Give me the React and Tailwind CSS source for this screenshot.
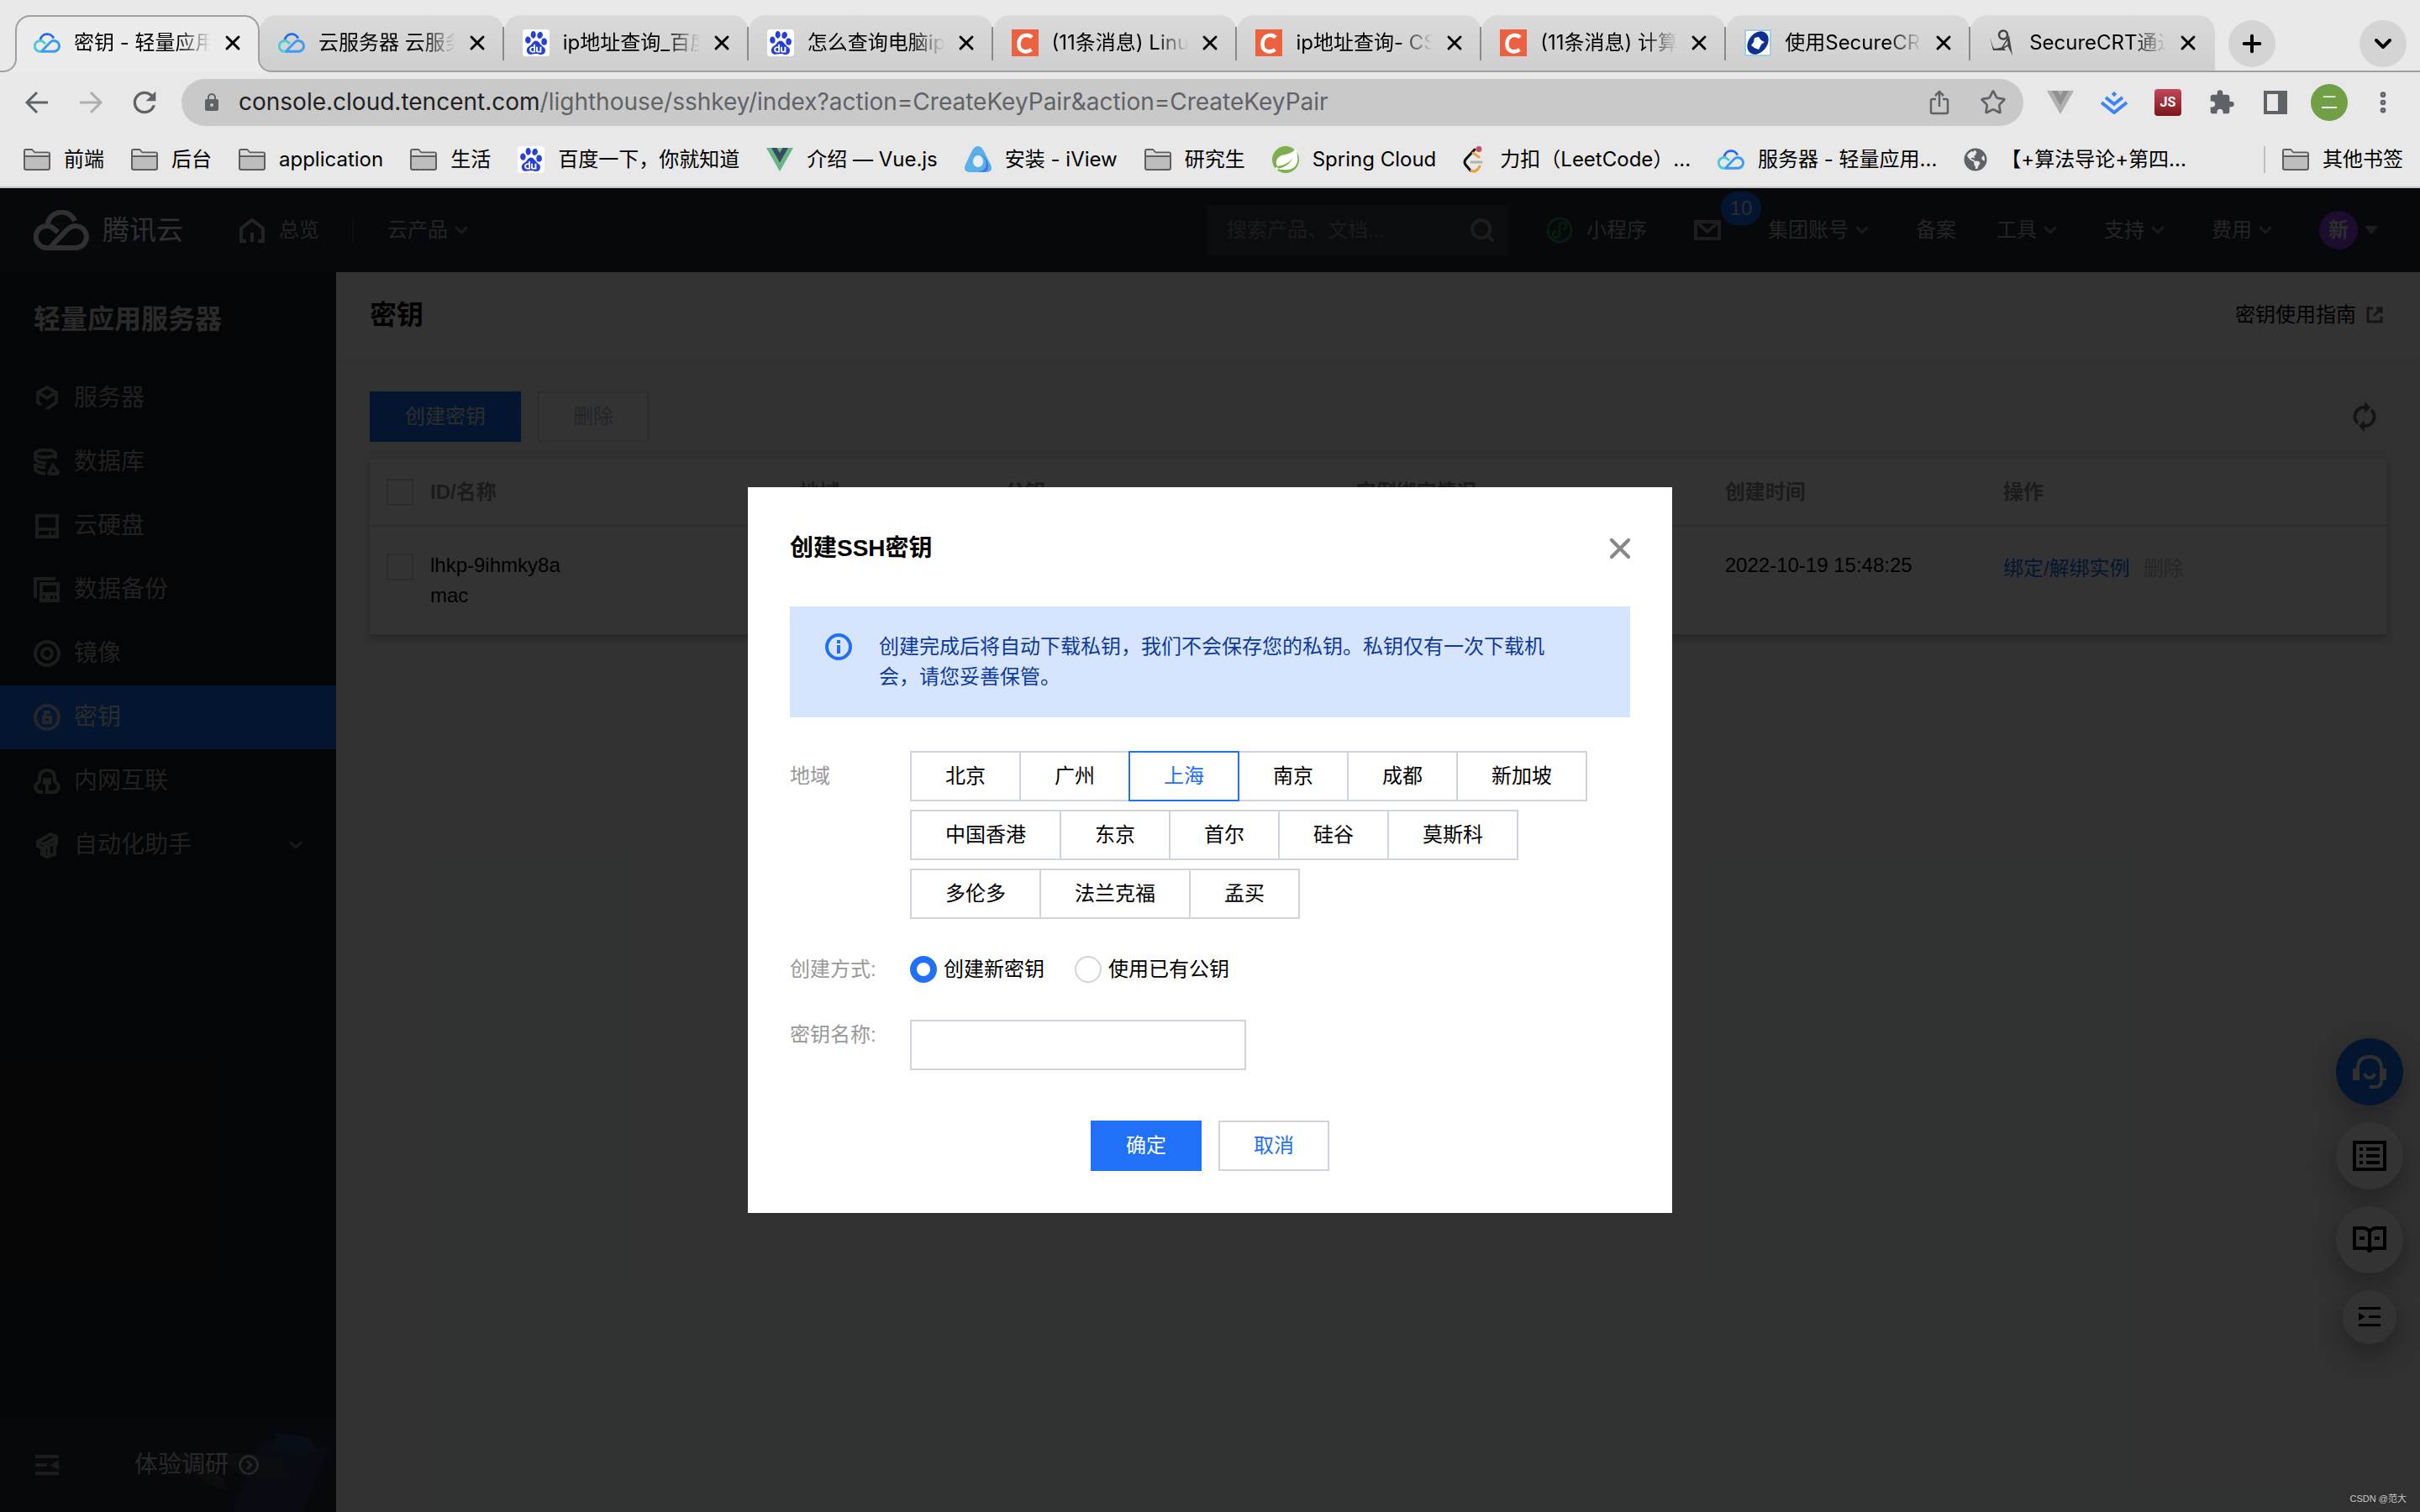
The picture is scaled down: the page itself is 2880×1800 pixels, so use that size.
import { useState } from "react"
import { ChevronDown, MoreVertical, Plus, Search, Star, X } from "lucide-react"
import { FaGlobeAmericas } from "react-icons/fa"
import { MdExtension, MdLock, MdRefresh } from "react-icons/md"
import { SiBaidu } from "react-icons/si"

/* ---------- brand icons ---------- */

const CloudLogo = ({ colored, className }) => (
  <svg viewBox="0 0 66 48" fill="none" strokeWidth="6" className={className} aria-hidden="true">
    <path d="M16.5 17A17 17 0 0 1 49 13" stroke={colored ? "#2468f2" : "currentColor"} />
    <path d="M29 26.5L24.5 22.5A13 13 0 1 0 16 45H22" stroke={colored ? "#4fc9d3" : "currentColor"} />
    <path d="M18 45H50A13 13 0 1 0 41 22.5L21 43" stroke={colored ? "#3b9bf7" : "currentColor"} />
  </svg>
)

const BaiduIcon = () => (
  <span className="flex size-8 shrink-0 items-center justify-center rounded bg-white">
    <SiBaidu className="size-7 text-[#2440d8]" />
  </span>
)

const CsdnIcon = () => (
  <svg viewBox="0 0 32 32" className="size-8 shrink-0" aria-hidden="true">
    <rect width="32" height="32" fill="#ec6140" />
    <path d="M24 9.500C21 6 10 4.500 8.500 16C7.500 27.500 18 28 23.500 24" fill="none" stroke="#fff" strokeWidth="4.500" />
  </svg>
)

const RingIcon = () => (
  <svg viewBox="0 0 32 32" className="size-8 shrink-0" aria-hidden="true">
    <rect x="1" y="1" width="30" height="30" fill="#fff" stroke="#9fd0e0" strokeWidth="2" />
    <ellipse cx="16" cy="16" rx="11" ry="15" transform="rotate(38 16 16)" fill="#0e2f93" />
    <path d="M12 10l5-1 3 4 4 2-4 3-3 6-5-2-4-3 3-4z" fill="#fff" />
  </svg>
)

const FigureIcon = () => (
  <svg viewBox="0 0 32 32" className="size-8 shrink-0" aria-hidden="true">
    <circle cx="17" cy="6.500" r="5" fill="none" stroke="#444" strokeWidth="2.500" />
    <path d="M1 9L5 21L7 23L15 21.500L24 7L28 31L22.500 20L18 22.500L20 25L5 25z" fill="#444" />
    <path d="M17 21L22 13L22.500 18z" fill="#d2d2d2" />
  </svg>
)

const VueIcon = ({ outer = "#64b687", inner = "#3a4b60" }) => (
  <svg viewBox="0 0 32 28" className="h-7 w-8 shrink-0" aria-hidden="true">
    <path d="M0 0h32L16 28z" fill={outer} />
    <path d="M6 0h6.500L16 6l3.500-6H26L16 17.500z" fill={inner} />
  </svg>
)

const IViewIcon = () => (
  <svg viewBox="0 0 32 32" className="size-8 shrink-0" aria-hidden="true">
    <path d="M16 0C20 0 22 4 25 10L31 22C34 29 30 31 25 31H7C2 31-2 29 1 22L7 9C10 3 12 0 16 0z" fill="#5bb0e8" />
    <path d="M7 12C12 7 20 8 24 15C28 23 24 30 16 31H21C28 31 30 26 27 18C23 9 13 7 7 12z" fill="#3f78e6" />
    <ellipse cx="16" cy="18" rx="6" ry="7" fill="#e8eefa" />
  </svg>
)

const SpringIcon = () => (
  <svg viewBox="0 0 32 32" className="size-8 shrink-0" aria-hidden="true">
    <circle cx="16" cy="16" r="16" fill="#7bb04b" />
    <path d="M28 3Q34 20 25 26Q18 30 6 27Q20 25 25 13Q20 22 6 24Q2 16 11 11Q24 9 28 3z" fill="#fff" />
    <circle cx="5.500" cy="26.500" r="1.500" fill="#fff" />
  </svg>
)

const LeetIcon = () => (
  <svg viewBox="0 0 28 32" className="h-8 w-7 shrink-0" fill="none" strokeWidth="3" strokeLinecap="round" aria-hidden="true">
    <path d="M14 4L3 16Q1 19 3 22L9 29" stroke="#111" />
    <path d="M12 8L19 13M10 29Q14 32 18 27L20 24" stroke="#e9a33b" />
    <path d="M10 19H22" stroke="#b3b3b3" />
    <circle cx="19" cy="3.500" r="3.500" fill="#c65353" />
  </svg>
)

const FolderIcon = () => (
  <svg viewBox="0 0 32 26" className="h-[26px] w-8 shrink-0" aria-hidden="true">
    <path d="M1 23V3Q1 1 3 1H10L13 4.500H29Q31 4.500 31 6.500V23Q31 25 29 25H3Q1 25 1 23z" fill="#bdbdbd" stroke="#5e5e5e" strokeWidth="2" />
    <path d="M2 2H10L13 5.500H30V8H2z" fill="#d9d9d9" />
    <path d="M1 9H31" stroke="#5e5e5e" strokeWidth="2" />
  </svg>
)

const TencentFavicon = () => <CloudLogo colored className="h-6 w-8 shrink-0" />

/* ---------- browser chrome ---------- */

const tabs = [
  { title: "密钥 - 轻量应用", icon: TencentFavicon },
  { title: "云服务器 云服务", icon: TencentFavicon },
  { title: "ip地址查询_百度", icon: BaiduIcon },
  { title: "怎么查询电脑ip", icon: BaiduIcon },
  { title: "(11条消息) Linu", icon: CsdnIcon },
  { title: "ip地址查询- CS", icon: CsdnIcon },
  { title: "(11条消息) 计算", icon: CsdnIcon },
  { title: "使用SecureCR", icon: RingIcon },
  { title: "SecureCRT通过", icon: FigureIcon },
]

const bookmarks = [
  { title: "前端", icon: FolderIcon },
  { title: "后台", icon: FolderIcon },
  { title: "application", icon: FolderIcon },
  { title: "生活", icon: FolderIcon },
  { title: "百度一下，你就知道", icon: BaiduIcon },
  { title: "介绍 — Vue.js", icon: VueIcon },
  { title: "安装 - iView", icon: IViewIcon },
  { title: "研究生", icon: FolderIcon },
  { title: "Spring Cloud", icon: SpringIcon },
  { title: "力扣（LeetCode）...", icon: LeetIcon },
  { title: "服务器 - 轻量应用...", icon: TencentFavicon },
  { title: "【+算法导论+第四...", icon: () => <FaGlobeAmericas className="size-7 shrink-0 text-[#5f6368]" /> },
]

const Tab = ({ tab, active, divider }) => {
  const Icon = tab.icon
  return (
    <div className={active ? "relative z-10 -mb-[2px] min-w-0 flex-1 bg-[#e9e9e9]" : "relative min-w-0 flex-1 rounded-t-[20px] bg-linear-to-b from-[#dadada] to-[#cfcfcf]"}>
      {active && (
        <>
          <span className="absolute inset-x-0 bottom-0 h-4 bg-[#ececec]" />
          <span className="absolute inset-x-0 top-0 bottom-4 rounded-t-[18px] border-2 border-b-0 border-[#a0a0a0] bg-[#ececec]" />
          <span className="absolute -left-4 bottom-0 h-4 w-[18px] bg-[#ececec]">
            <span className="block size-full rounded-br-2xl border-r-2 border-b-2 border-[#a0a0a0] bg-[#e9e9e9]" />
          </span>
          <span className="absolute -right-4 bottom-0 h-4 w-[18px] bg-[#ececec]">
            <span className="block size-full rounded-bl-2xl border-b-2 border-l-2 border-[#a0a0a0] bg-[#cfcfcf]" />
          </span>
        </>
      )}
      <div className="relative flex h-[66px] items-center gap-4 pr-[22px] pl-[22px]">
        <Icon />
        <span className="min-w-0 flex-1 overflow-hidden whitespace-nowrap [mask-image:linear-gradient(to_right,#000_75%,transparent)]">
          {tab.title}
        </span>
        <button aria-label="关闭标签页">
          <X className="-mx-1 size-7" strokeWidth={2.5} />
        </button>
      </div>
      {divider && <span className="absolute top-[14px] right-0 h-10 w-[2px] bg-[#8a8a8a]" />}
    </div>
  )
}

const BrowserChrome = () => (
  <div className="border-b-2 border-[#c6c6c6] bg-[#e8e8e8] font-['Inter','Noto_Sans_CJK_SC',sans-serif] text-2xl text-black">
    <div className="flex items-end border-b-2 border-[#a0a0a0] bg-[#e9e9e9] pt-[18px] pr-4 pl-[18px]">
      <div className="flex min-w-0 flex-1">
        {tabs.map((tab, i) => (
          <Tab key={i} tab={tab} active={i === 0} divider={i > 0 && i < tabs.length - 1} />
        ))}
      </div>
      <button aria-label="新标签页" className="mb-1 ml-4 flex size-14 items-center justify-center rounded-full bg-[#d4d4d4]">
        <Plus className="size-8" strokeWidth={3} />
      </button>
      <button aria-label="搜索标签页" className="mb-1 ml-[100px] flex size-14 items-center justify-center rounded-full bg-[#d4d4d4]">
        <ChevronDown className="size-8" strokeWidth={3} />
      </button>
    </div>

    <div className="flex items-center py-2 pr-[22px] pl-7 text-[#5f6368]">
      <div className="flex gap-8">
        <button aria-label="后退">
          <svg viewBox="0 0 32 32" className="size-8" fill="none" stroke="currentColor" strokeWidth="3">
            <path d="M29 16H5M16 4L4 16L16 28" />
          </svg>
        </button>
        <button aria-label="前进" className="text-[#acaeb0]">
          <svg viewBox="0 0 32 32" className="size-8" fill="none" stroke="currentColor" strokeWidth="3">
            <path d="M3 16H27M16 4L28 16L16 28" />
          </svg>
        </button>
        <button aria-label="重新加载">
          <MdRefresh className="-m-1 size-10" />
        </button>
      </div>
      <div className="ml-7 flex h-14 min-w-0 flex-1 items-center rounded-full bg-[#c9c9c9] pr-5 pl-6">
        <MdLock className="size-6 shrink-0" />
        <span className="min-w-0 flex-1 truncate pl-5 text-[28px]">
          <span className="text-[#202124]">console.cloud.tencent.com</span>
          /lighthouse/sshkey/index?action=CreateKeyPair&amp;action=CreateKeyPair
        </span>
        <button aria-label="分享">
          <svg viewBox="0 0 32 32" className="size-8" fill="none" stroke="currentColor" strokeWidth="2.500">
            <path d="M12 12H8Q6 12 6 14V27Q6 29 8 29H24Q26 29 26 27V14Q26 12 24 12H20M16 21V3M11 8L16 3L21 8" />
          </svg>
        </button>
        <button aria-label="收藏" className="ml-8">
          <Star className="size-8" />
        </button>
      </div>
      <div className="ml-[22px] flex items-center gap-5">
        <button aria-label="Vue 扩展" className="flex w-11 justify-center">
          <VueIcon outer="#b0b0b0" inner="#909090" />
        </button>
        <button aria-label="掘金扩展" className="flex w-11 justify-center">
          <svg viewBox="0 0 32 28" className="h-7 w-8" fill="none" stroke="#3d84f7" strokeWidth="4">
            <path d="M16 1l3 3-3 3-3-3z" fill="#3d84f7" strokeWidth="0.500" />
            <path d="M6 8L16 16L26 8M1 14L16 26L31 14" />
          </svg>
        </button>
        <button className="flex h-8 w-11 justify-center font-['Roboto'] text-base font-bold text-white">
          <span className="flex size-8 items-center justify-center rounded bg-linear-to-b from-[#c2475a] to-[#7c1618]">JS</span>
        </button>
        <button aria-label="扩展程序" className="flex w-11 justify-center">
          <MdExtension className="size-8" />
        </button>
        <button aria-label="侧边栏" className="flex w-11 justify-center">
          <svg viewBox="0 0 28 28" className="size-7">
            <path d="M0 0H28V28H0zM4 4V24H17V4z" fill="currentColor" fillRule="evenodd" />
          </svg>
        </button>
        <button className="flex size-11 items-center justify-center rounded-full bg-[#719f45] text-xl text-white">二</button>
        <button aria-label="菜单" className="flex w-11 justify-center">
          <MoreVertical className="size-8" strokeWidth={3} />
        </button>
      </div>
    </div>

    <div className="flex h-16 items-center gap-8 pr-5 pl-7">
      {bookmarks.map(({ title, icon: Icon }) => (
        <a key={title} href="#" className="flex items-center gap-4 whitespace-nowrap">
          <Icon />
          {title}
        </a>
      ))}
      <div className="ml-auto flex items-center gap-5">
        <span className="h-8 w-[2px] bg-[#c0c0c0]" />
        <a href="#" className="flex items-center gap-4 whitespace-nowrap">
          <FolderIcon />
          其他书签
        </a>
      </div>
    </div>
  </div>
)

/* ---------- console header ---------- */

const Caret = ({ className = "" }) => <ChevronDown className={`size-6 opacity-70 ${className}`} strokeWidth={3} />

const TopBar = () => (
  <header className="flex h-[100px] items-center bg-[#23283a] text-2xl text-[#b4b4b4]">
    <a href="#" className="flex w-[284px] items-center gap-4 pl-10 text-[32px] text-[#eee]">
      <CloudLogo className="h-12 w-[66px]" />
      腾讯云
    </a>
    <a href="#" className="flex items-center gap-4">
      <svg viewBox="0 0 32 30" className="h-[30px] w-8" fill="none" stroke="currentColor" strokeWidth="4">
        <path d="M9 28H3V13L16 3L29 13V28H23M16 29V18" />
      </svg>
      总览
    </a>
    <span className="mx-10 h-8 w-px bg-[#555]" />
    <button className="flex items-center gap-1">
      云产品
      <Caret />
    </button>
    <div className="ml-auto flex items-center">
      <label className="mr-11 flex h-[60px] w-[360px] items-center bg-[#373d48] pr-4 pl-6">
        <input aria-label="搜索" placeholder="搜索产品、文档..." className="min-w-0 flex-1 outline-none placeholder:text-[#858585]" />
        <Search className="size-8 text-[#8f8f8f]" strokeWidth={3} />
      </label>
      <a href="#" className="flex items-center gap-4">
        <svg viewBox="0 0 32 32" className="size-8" fill="none" stroke="#238c3c" strokeWidth="3">
          <circle cx="16" cy="16" r="14" />
          <path d="M12 17A4 4 0 1 0 16 20V12A4 4 0 1 1 20 15" />
        </svg>
        小程序
      </a>
      <a href="#" aria-label="消息" className="relative mr-14 ml-14">
        <svg viewBox="0 0 32 24" className="h-6 w-8" fill="none" stroke="#8f8f8f" strokeWidth="4">
          <path d="M2 2H30V22H2zM4 3L16 14L28 3" />
        </svg>
        <span className="absolute -top-[34px] left-8 flex h-10 w-12 items-center justify-center rounded-full bg-[#146bec] text-2xl text-[#d6d6d6]">10</span>
      </a>
      <button className="flex items-center gap-1">集团账号<Caret /></button>
      <a href="#" className="ml-[52px]">备案</a>
      <button className="ml-12 flex items-center gap-1">工具<Caret /></button>
      <button className="ml-[52px] flex items-center gap-1">支持<Caret /></button>
      <button className="ml-[52px] flex items-center gap-1">费用<Caret /></button>
      <button className="mr-[50px] ml-[52px] flex items-center gap-2">
        <span className="flex size-[46px] items-center justify-center rounded-full bg-[#8a3ce0] font-bold text-[#e0e0e0]">新</span>
        <svg viewBox="0 0 16 10" className="h-[10px] w-4">
          <path d="M0 0H16L8 10z" fill="#8f8f8f" />
        </svg>
      </button>
    </div>
  </header>
)

/* ---------- side nav ---------- */

const navItems = [
  { title: "服务器", icon: <path d="M5 22V9L16 3L27 9V21L17 28M5 9L16 16L27 9M5 21L9 24M16 29V27" /> },
  {
    title: "数据库",
    icon: (
      <>
        <ellipse cx="14" cy="6" rx="12" ry="4.500" />
        <path d="M2 6V13Q8 18 15 17M26 6V12M2 18V25Q4 29 14 30M2 19Q7 23 14 22M18 29L23 20L29 28Q29 30 27 30H20Q18 30 18 29z" />
      </>
    ),
  },
  { title: "云硬盘", icon: <path d="M4 4H28V29H4zM4 20H28M18 25H21M24 25H25" /> },
  { title: "数据备份", icon: <path d="M2 26V3H26M9 9H29V29H9zM9 21H29M13 25H20M23 25H25" /> },
  {
    title: "镜像",
    icon: (
      <>
        <circle cx="16" cy="16" r="14" />
        <circle cx="16" cy="16" r="6" />
      </>
    ),
  },
  {
    title: "密钥",
    active: true,
    icon: (
      <>
        <circle cx="16" cy="16" r="14" />
        <path d="M12 16H20V22H12zM14 15V10H18V12" />
      </>
    ),
  },
  { title: "内网互联", icon: <path d="M11 29H8A6 6 0 0 1 5 18Q6 18 7 16Q6 3 16 3Q26 3 25 16Q26 18 27 18A6 6 0 0 1 24 29H16V16M13 14H19V18H13z" /> },
  { title: "自动化助手", expandable: true, icon: <path d="M5 12L20 3L27 6V15L25 18V27L16 30L10 27V20L5 17zM5 12L12 15L27 7M13 28V19L26 13M18 28V19" /> },
]

const SideNav = () => (
  <nav className="relative flex w-[400px] shrink-0 flex-col bg-[#181b20] text-[28px] text-[#a6a6a6]">
    <h2 className="px-10 py-8 text-[32px] leading-[48px] font-bold text-[#d0d0d0]">轻量应用服务器</h2>
    <ul>
      {navItems.map((item) => (
        <li key={item.title}>
          <a href="#" className={item.active ? "flex h-[76px] items-center gap-4 bg-[#146bec] px-10 text-[#d6d6d6]" : "flex h-[76px] items-center gap-4 px-10"}>
            <svg viewBox="0 0 32 32" className="size-8 opacity-80" fill="none" stroke="currentColor" strokeWidth="4" aria-hidden="true">
              {item.icon}
            </svg>
            {item.title}
            {item.expandable && <Caret className="-mr-1 ml-auto" />}
          </a>
        </li>
      ))}
    </ul>
    <div className="relative mt-auto flex h-28 items-center overflow-hidden bg-[#24293a] pl-[42px]">
      <svg viewBox="0 0 200 112" className="absolute right-0 bottom-0 h-28 w-[200px]" aria-hidden="true">
        <path d="M76 112L111 28L190 36L160 112z" fill="#2a3a5a" />
        <path d="M128 18L168 23L174 38L164 44L124 39z" fill="#2c456f" />
        <path d="M56 39L136 46Q140 70 158 72Q146 78 84 66Q66 52 56 39z" fill="#333d4c" />
        <path d="M12 44Q18 38 24 44L66 72L70 86L58 84L16 56z" fill="#3c3d42" />
      </svg>
      <button aria-label="收起菜单">
        <svg viewBox="0 0 28 24" className="h-6 w-7" fill="#8c8c8c">
          <path d="M0 0H28V4H0zM0 10H14V14H0zM0 20H28V24H0zM28 6V18L18 12z" />
        </svg>
      </button>
      <a href="#" className="relative ml-[90px] flex items-center gap-3 text-[#c8c8c8]">
        体验调研
        <svg viewBox="0 0 24 24" className="size-6" fill="none" stroke="currentColor" strokeWidth="2.500">
          <circle cx="12" cy="12" r="10.500" />
          <path d="M10 7L15 12L10 17" />
        </svg>
      </a>
    </div>
  </nav>
)

/* ---------- key list ---------- */

const Checkbox = ({ label }) => (
  <input type="checkbox" aria-label={label} className="block size-8 appearance-none border-2 border-[#cfd5de] bg-white" />
)

const KeyList = () => (
  <main className="min-w-0 flex-1 bg-[#f2f3f5] text-2xl leading-9 text-black">
    <div className="flex h-[102px] items-center justify-between bg-white px-10">
      <h1 className="text-[32px] font-bold">密钥</h1>
      <a href="#" className="flex items-center gap-3 pr-1">
        密钥使用指南
        <svg viewBox="0 0 20 20" className="size-5" fill="none" stroke="#666" strokeWidth="3">
          <path d="M8 2H2V18H18V12M12 2H18V8M18 2L9 11" />
        </svg>
      </a>
    </div>
    <div className="px-10 pt-10">
      <div className="mb-5 flex items-center gap-5">
        <button className="h-[60px] border-2 border-[#146bec] bg-[#146bec] px-10 text-[#e0e0e0]">创建密钥</button>
        <button disabled className="h-[60px] border-2 border-[#dcdfe6] bg-white px-10 text-[#a3b6d8]">删除</button>
        <button aria-label="刷新" className="mr-[10px] ml-auto">
          <svg viewBox="0 0 32 36" className="h-9 w-8" fill="none" stroke="#666" strokeWidth="4">
            <path d="M8 26A11 11 0 0 1 16 7M24 10A11 11 0 0 1 16 29" />
            <path d="M16 0L23 7L16 14zM16 36L9 29L16 22z" fill="#666" stroke="none" />
          </svg>
        </button>
      </div>
      <table className="w-full table-fixed border-collapse bg-white text-left shadow-[0_4px_8px_rgba(54,58,80,0.32)]">
        <colgroup>
          <col className="w-[52px]" />
          <col className="w-[18.3%]" />
          <col className="w-[10.2%]" />
          <col className="w-[17.4%]" />
          <col className="w-[18.3%]" />
          <col className="w-[13.8%]" />
          <col />
        </colgroup>
        <thead>
          <tr className="h-20 border-b-2 border-[#dadde6] text-[#888]">
            <th className="pl-5"><Checkbox label="全选" /></th>
            <th className="px-5">ID/名称</th>
            <th className="px-5">地域</th>
            <th className="px-5">公钥</th>
            <th className="px-5">实例绑定情况</th>
            <th className="px-5">创建时间</th>
            <th className="px-5">操作</th>
          </tr>
        </thead>
        <tbody>
          <tr className="align-top">
            <td className="pt-8 pl-5"><Checkbox label="选择密钥" /></td>
            <td className="px-5 py-7">
              <p>lhkp-9ihmky8a</p>
              <p>mac</p>
            </td>
            <td />
            <td />
            <td />
            <td className="px-5 py-7">2022-10-19 15:48:25</td>
            <td className="px-5 pt-8">
              <a href="#" className="text-[#146bec]">绑定/解绑实例</a>
              <button disabled className="ml-4 text-[#bbb]">删除</button>
            </td>
          </tr>
        </tbody>
      </table>
    </div>
  </main>
)

/* ---------- floating help buttons ---------- */

const FloatingTools = () => (
  <div className="absolute right-5 bottom-[200px] flex flex-col items-center gap-5">
    <button aria-label="在线客服" className="flex size-20 items-center justify-center rounded-full bg-[#146bec] text-[#eee] shadow-[0_12px_32px_rgba(54,58,80,0.4)]">
      <svg viewBox="0 0 40 40" className="size-10" fill="none" stroke="currentColor" strokeWidth="4">
        <path d="M6 30V16Q6 2 20 2Q34 2 34 16V30Q34 38 27 38H20M14 22Q15 27 20 27Q25 27 26 22" />
        <path d="M0 16H8V30H0zM32 16H40V30H32z" fill="currentColor" stroke="none" />
      </svg>
    </button>
    <button aria-label="文档列表" className="flex size-20 items-center justify-center rounded-full bg-white shadow-[0_12px_32px_rgba(54,58,80,0.4)]">
      <svg viewBox="0 0 40 36" className="h-9 w-10" fill="none" stroke="#000" strokeWidth="4">
        <path d="M2 2H38V34H2zM8 10H12M16 10H32M8 18H12M16 18H32M8 26H12M16 26H32" />
      </svg>
    </button>
    <button aria-label="帮助手册" className="flex size-20 items-center justify-center rounded-full bg-white shadow-[0_12px_32px_rgba(54,58,80,0.4)]">
      <svg viewBox="0 0 40 32" className="h-8 w-10" fill="none" stroke="#000" strokeWidth="4">
        <path d="M20 6Q17 2 12 2H2V26H16Q20 27 20 31Q20 27 24 26H38V2H28Q23 2 20 6V30M8 14H14M26 14H32" />
      </svg>
    </button>
    <button aria-label="收起工具" className="flex size-16 items-center justify-center rounded-full bg-white shadow-[0_12px_32px_rgba(54,58,80,0.4)]">
      <svg viewBox="0 0 26 24" className="h-6 w-[26px]" fill="#000">
        <path d="M0 0H26V3H0zM12 10H26V13H12zM0 20H26V23H0zM0 7V16L8 11.500z" />
      </svg>
    </button>
  </div>
)

/* ---------- create key dialog ---------- */

const regions = ["北京", "广州", "上海", "南京", "成都", "新加坡", "中国香港", "东京", "首尔", "硅谷", "莫斯科", "多伦多", "法兰克福", "孟买"]

const radioClass =
  "size-8 appearance-none rounded-full border-2 border-[#cfd5de] bg-white checked:border-8 checked:border-[#2071f7]"

const CreateKeyDialog = () => {
  const [region, setRegion] = useState("上海")
  const [mode, setMode] = useState("new")
  const [name, setName] = useState("")

  return (
    <div role="dialog" aria-labelledby="dialog-title" className="w-[1100px] bg-white p-[50px] text-2xl leading-9 text-black">
      <div className="mb-[46px] flex h-[46px] items-center justify-between">
        <h3 id="dialog-title" className="text-[28px] font-bold">创建SSH密钥</h3>
        <button aria-label="关闭">
          <X className="-mr-2 size-10 text-[#888]" strokeWidth={2.5} />
        </button>
      </div>

      <div className="flex gap-8 bg-[#d6e5fd] py-[30px] pr-20 pl-[42px] text-[#0d3aa0]">
        <svg viewBox="0 0 32 32" className="mt-[2px] size-8 shrink-0" fill="none" stroke="#2071f7" strokeWidth="4">
          <circle cx="16" cy="16" r="14" />
          <path d="M16 8V12M16 14V24" />
        </svg>
        <p>创建完成后将自动下载私钥，我们不会保存您的私钥。私钥仅有一次下载机会，请您妥善保管。</p>
      </div>

      <form className="mt-10" onSubmit={(e) => e.preventDefault()}>
        <div className="flex">
          <span className="w-[143px] shrink-0 pt-3 text-[#999]">地域</span>
          <div className="flex flex-wrap gap-y-[10px]">
            {regions.map((r) => (
              <button
                key={r}
                type="button"
                onClick={() => setRegion(r)}
                className={
                  r === region
                    ? "relative -mr-[2px] h-[60px] border-2 border-[#2071f7] px-10 text-[#2071f7]"
                    : "-mr-[2px] h-[60px] border-2 border-[#cfd5de] px-10"
                }
              >
                {r}
              </button>
            ))}
          </div>
        </div>

        <div className="mt-10 flex h-10 items-center">
          <span className="w-[143px] shrink-0 text-[#999]">创建方式:</span>
          <label className="flex items-center gap-2">
            <input type="radio" name="mode" checked={mode === "new"} onChange={() => setMode("new")} className={radioClass} />
            创建新密钥
          </label>
          <label className="ml-9 flex items-center gap-2">
            <input type="radio" name="mode" checked={mode === "exist"} onChange={() => setMode("exist")} className={radioClass} />
            使用已有公钥
          </label>
        </div>

        <div className="mt-10 flex">
          <label htmlFor="key-name" className="w-[143px] shrink-0 text-[#999]">密钥名称:</label>
          <input
            id="key-name"
            value={name}
            onChange={(e) => setName(e.target.value)}
            className="h-[60px] w-[400px] border-2 border-[#cfd5de] px-5 outline-none"
          />
        </div>

        <div className="mt-[60px] flex justify-center gap-5">
          <button type="submit" className="h-[60px] border-2 border-[#2071f7] bg-[#2071f7] px-10 text-white">确定</button>
          <button type="button" className="h-[60px] border-2 border-[#cfd5de] px-10 text-[#2071f7]">取消</button>
        </div>
      </form>
    </div>
  )
}

const App = () => (
  <div className="flex min-h-screen flex-col font-['Liberation_Sans','Noto_Sans_CJK_SC',sans-serif]">
    <BrowserChrome />
    <div className="relative flex flex-1 flex-col">
      <TopBar />
      <div className="flex flex-1">
        <SideNav />
        <KeyList />
      </div>
      <FloatingTools />
      <div className="absolute inset-0 flex items-center justify-center bg-black/80">
        <CreateKeyDialog />
      </div>
      <span className="absolute right-4 bottom-2 text-[11px] leading-4 text-[#c8c8c8]">CSDN @范大</span>
    </div>
  </div>
)

export default App
